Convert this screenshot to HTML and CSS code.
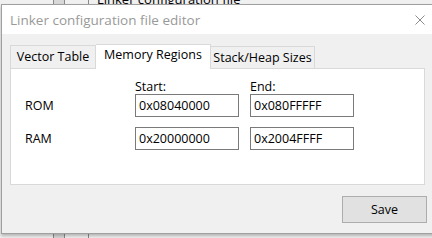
FILE: index.html
```html
<!DOCTYPE html>
<html>
<head>
    <title>Linker configuration file editor</title>
    <link rel="stylesheet" href="styles.css">
</head>
<body>
    <div class="backdrop">
        <div class="back-col back-col-a"></div>
        <div class="back-col back-col-b"></div>
        <div class="back-title">Linker configuration file</div>
    </div>

    <div class="dialog">
        <div class="titlebar">
            <span class="title">Linker configuration file editor</span>
            <svg class="close" width="10" height="10" viewBox="0 0 10 10">
                <path d="M0.5 0.5 L9.5 9.5 M9.5 0.5 L0.5 9.5" stroke="#8a8a8a" stroke-width="1" fill="none"/>
            </svg>
        </div>
        <div class="content">
            <div class="tabs">
                <div class="tab tab-vector">Vector Table</div>
                <div class="tab tab-memory active">Memory Regions</div>
                <div class="tab tab-stack">Stack/Heap Sizes</div>
            </div>
            <div class="panel">
                <div class="heads">
                    <span class="col-head">Start:</span>
                    <span class="col-head">End:</span>
                </div>
                <div class="regions">
                    <span class="row-label">ROM</span>
                    <input class="field" type="text" value="0x08040000">
                    <input class="field" type="text" value="0x080FFFFF">

                    <span class="row-label">RAM</span>
                    <input class="field" type="text" value="0x20000000">
                    <input class="field" type="text" value="0x2004FFFF">
                </div>
            </div>
            <div class="footer">
                <button class="save">Save</button>
            </div>
        </div>
    </div>
</body>
</html>
```

FILE: styles.css
```css
html, body {
    margin: 0;
    padding: 0;
    width: 432px;
    height: 238px;
    overflow: hidden;
}

body {
    position: relative;
    background-color: #f0f0f0;
    font-family: "Open Sans", "Noto Sans", sans-serif;
    font-size: 12.5px;
    color: #000000;
    padding: 4px 0 0 1px;
    box-sizing: border-box;
}

/* window behind the dialog */
.backdrop {
    position: absolute;
    left: 0;
    top: 0;
    width: 432px;
    height: 238px;
}

.back-col {
    position: absolute;
    top: 0;
    bottom: 0;
    border-left: 1px solid #8a8a8a;
}

.back-col-a {
    left: 53px;
    width: 10px;
    background-color: #d8d8d8;
    border-right: 1px solid #8a8a8a;
}

.back-col-b {
    left: 88px;
}

.back-title {
    position: absolute;
    left: 97px;
    top: -10px;
    font-size: 13px;
    color: #000000;
}

.dialog {
    position: relative;
    width: 440px;
    height: 230px;
    border: 1px solid #a0a0a0;
    box-sizing: border-box;
    background-color: #f0f0f0;
    box-shadow: 0 2px 3px rgba(0, 0, 0, 0.25);
}

.titlebar {
    height: 29px;
    background-color: #ffffff;
    display: flex;
    align-items: center;
    padding-left: 8px;
}

.title {
    color: #999999;
    font-size: 13.5px;
    flex: 1;
}

.close {
    margin-right: 15px;
}

.content {
    padding: 9px 0 0 8px;
    width: 415px;
}

.tabs {
    display: flex;
    align-items: flex-end;
    height: 25px;
}

.tab {
    height: 23px;
    line-height: 21px;
    text-align: center;
    border: 1px solid #d9d9d9;
    border-bottom: none;
    box-sizing: border-box;
    background-color: #f0f0f0;
}

.tab-vector {
    width: 86px;
}

.tab-memory {
    width: 115px;
}

.tab-stack {
    width: 104px;
    height: 22px;
    border-left: none;
}

.tab.active {
    height: 25px;
    line-height: 20px;
    background-color: #ffffff;
    border-left: none;
    margin-bottom: -1px;
    position: relative;
    z-index: 1;
}

.panel {
    height: 117px;
    background-color: #ffffff;
    border: 1px solid #d9d9d9;
    box-sizing: border-box;
    padding: 11px 0 0 14px;
}

.heads {
    display: flex;
    gap: 11px;
    height: 14px;
    line-height: 14px;
    padding-left: 110px;
}

.col-head {
    width: 104px;
}

.regions {
    display: grid;
    grid-template-columns: 99px 104px 104px;
    grid-auto-rows: 23px;
    column-gap: 11px;
    row-gap: 10px;
    align-items: center;
}

.field {
    width: 104px;
    height: 23px;
    box-sizing: border-box;
    border: 1px solid #7a7a7a;
    font-family: "Open Sans", "Noto Sans", sans-serif;
    font-size: 12.5px;
    padding: 0 0 0 3px;
    margin: 0;
    color: #000000;
    background-color: #ffffff;
}

.footer {
    display: flex;
    justify-content: flex-end;
    padding-top: 11px;
}

.save {
    width: 85px;
    height: 27px;
    margin-right: -2px;
    border: 1px solid #adadad;
    background-color: #e1e1e1;
    font-family: "Open Sans", "Noto Sans", sans-serif;
    font-size: 12.5px;
    color: #000000;
    padding: 0;
}
```
